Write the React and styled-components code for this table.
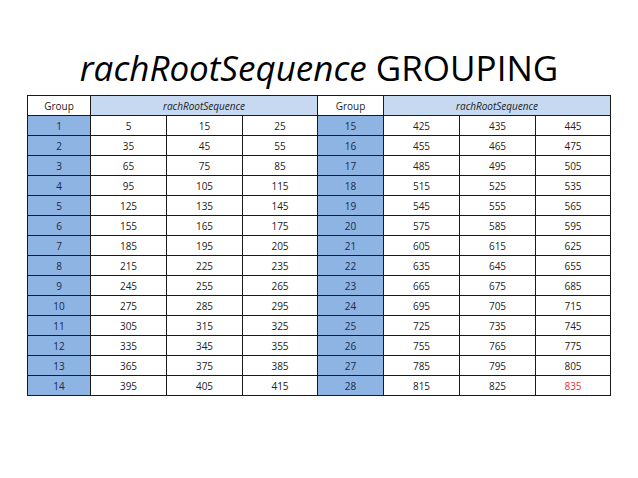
import React from "react";
import styled, { createGlobalStyle } from "styled-components";

const GlobalStyle = createGlobalStyle`
  html, body {
    margin: 0;
    padding: 0;
    background: #ffffff;
  }
  body {
    font-family: "Open Sans", "Liberation Sans", sans-serif;
  }
`;

const Slide = styled.div`
  width: 638px;
  height: 478px;
  display: flex;
  flex-direction: column;
  align-items: center;
  box-sizing: border-box;
  padding-top: 42px;
`;

const Title = styled.h1`
  margin: 0 0 2px;
  height: 51px;
  font-weight: 400;
  font-size: 35px;
  line-height: 51px;
  color: #000;

  em {
    font-style: italic;
  }
`;

const Table = styled.table`
  border-collapse: collapse;
  table-layout: fixed;
  width: 583px;
  align-self: flex-start;
  margin-left: 27px;
  font-size: 10px;
  color: #222;
`;

const Cell = styled.td`
  height: 19px;
  padding: 0;
  border: 1px solid #1a1a1a;
  text-align: center;
  vertical-align: middle;
  background: ${(p) => (p.$group ? "#8db4e2" : p.$head ? "#c6d9f1" : "#ffffff")};
  color: ${(p) => (p.$red ? "#e0303a" : p.$group ? "#1b2a48" : "#222")};
  font-style: ${(p) => (p.$italic ? "italic" : "normal")};
`;

const widths = [63, 76, 76, 75, 66, 76, 76, 75];

const rows = Array.from({ length: 14 }, (_, i) => ({
  left: i + 1,
  leftVals: [5 + 30 * i, 15 + 30 * i, 25 + 30 * i],
  right: i + 15,
  rightVals: [425 + 30 * i, 435 + 30 * i, 445 + 30 * i],
}));

export default function App() {
  return (
    <>
      <GlobalStyle />
      <Slide>
        <Title>
          <em>rachRootSequence</em> GROUPING
        </Title>
        <Table>
          <colgroup>
            {widths.map((w, i) => (
              <col key={i} style={{ width: w }} />
            ))}
          </colgroup>
          <tbody>
            <tr>
              <Cell>Group</Cell>
              <Cell $head $italic colSpan={3}>
                rachRootSequence
              </Cell>
              <Cell>Group</Cell>
              <Cell $head $italic colSpan={3}>
                rachRootSequence
              </Cell>
            </tr>
            {rows.map((r) => (
              <tr key={r.left}>
                <Cell $group>{r.left}</Cell>
                {r.leftVals.map((v) => (
                  <Cell key={v}>{v}</Cell>
                ))}
                <Cell $group>{r.right}</Cell>
                {r.rightVals.map((v) => (
                  <Cell key={v} $red={v === 835}>
                    {v}
                  </Cell>
                ))}
              </tr>
            ))}
          </tbody>
        </Table>
      </Slide>
    </>
  );
}
